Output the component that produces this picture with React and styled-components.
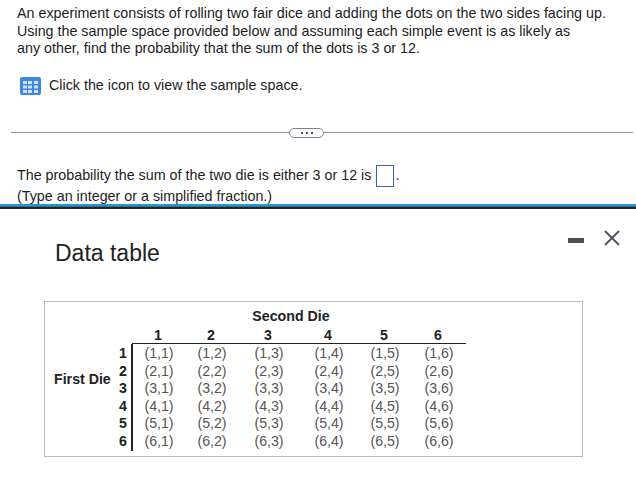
import React from "react";
import styled, { createGlobalStyle } from "styled-components";

const GlobalStyle = createGlobalStyle`
  html, body {
    margin: 0;
    padding: 0;
    background: #fff;
  }
  body {
    width: 636px;
    height: 496px;
    overflow: hidden;
    font-family: "Liberation Sans", Arial, sans-serif;
    color: #1c1c1c;
  }
`;

const Page = styled.div`
  width: 636px;
  height: 496px;
  display: flex;
  flex-direction: column;
`;

const Question = styled.section`
  height: 204px;
  overflow: hidden;
  padding: 5px 0 0 17px;
  box-sizing: border-box;
  font-size: 14.3px;
  line-height: 17.5px;
`;

const Prompt = styled.p`
  margin: 0;
  white-space: pre-line;
`;

const IconRow = styled.div`
  display: flex;
  align-items: center;
  gap: 8px;
  margin: 18px 0 0 3px;
  height: 20px;
`;

const Divider = styled.div`
  display: flex;
  align-items: center;
  margin: 32px 3px 0 -6px;
  height: 10px;
`;

const Rule = styled.div`
  flex: ${(p) => p.$grow};
  height: 1px;
  background: #8a90a3;
`;

const MoreButton = styled.div`
  width: 33px;
  height: 8px;
  border: 1px solid #7c8294;
  border-radius: 5px;
  display: flex;
  align-items: center;
  justify-content: center;
  gap: 3px;
`;

const Dot = styled.span`
  width: 2px;
  height: 2px;
  background: #4a5060;
`;

const Answer = styled.div`
  display: flex;
  align-items: center;
  margin-top: 26px;
  height: 24px;
`;

const AnswerBox = styled.span`
  width: 16px;
  height: 20px;
  border: 1px solid #2f66c4;
  margin: 0 1px 0 5px;
`;

const Hint = styled.div`
  margin-top: 0;
`;

const Modal = styled.section`
  flex: 1;
  position: relative;
  border-top: 2px solid #1f9ad0;
  &::before {
    content: "";
    display: block;
    height: 3px;
    background: linear-gradient(#3a6f86 0 1px, #20262e 1px);
  }
`;

const ModalHead = styled.div`
  display: flex;
  justify-content: space-between;
  align-items: flex-start;
  height: 92px;
  box-sizing: border-box;
  padding: 29px 16px 0 55px;
`;

const ModalTitle = styled.h2`
  margin: 0;
  font-size: 23px;
  line-height: 30px;
  font-weight: 400;
  color: #222;
`;

const Controls = styled.div`
  display: flex;
  align-items: center;
  gap: 20px;
  margin-top: -8px;
`;

const TableFrame = styled.div`
  width: 537px;
  height: 154px;
  margin-left: 44px;
  border: 1px solid #b9b9b9;
  display: flex;
  flex-direction: column;
  font-size: 14.2px;
`;

const AxisTitle = styled.div`
  font-weight: 700;
  color: #222;
  text-align: center;
  width: 334px;
  margin: 6px 0 0 87px;
  height: 17px;
  line-height: 17px;
  padding-right: 16px;
  box-sizing: border-box;
`;

const Grid = styled.div`
  display: flex;
`;

const SideLabel = styled.div`
  width: 66px;
  font-weight: 700;
  padding-left: 9px;
  box-sizing: border-box;
  color: #222;
  display: flex;
  align-items: center;
  margin-top: 19px;
  padding-bottom: 37px;
  white-space: nowrap;
`;

const RowNumbers = styled.div`
  width: 21px;
  margin-top: 20px;
`;

const Table = styled.div`
  display: grid;
  grid-template-columns: 52px 54px 60px 60px 52px 56px;
  grid-auto-rows: 17.6px;
  padding-top: 1px;
`;

const ColHead = styled.div`
  font-weight: 700;
  text-align: center;
  height: 19px;
  line-height: 20px;
  color: #222;
  border-bottom: 1px solid #222;
  box-sizing: border-box;
`;

const Cell = styled.div`
  text-align: center;
  line-height: 17.6px;
  color: #555;
  white-space: nowrap;
`;

const Body = styled.div`
  border-left: 2px solid #222;
  margin-left: -1px;
`;

const RowNum = styled.div`
  font-weight: 700;
  text-align: right;
  padding-right: 5px;
  height: 17.6px;
  line-height: 17.6px;
  color: #222;
`;

const Head = styled.div`
  display: grid;
  grid-template-columns: 52px 54px 60px 60px 52px 56px;
`;

const Matrix = styled.div``;

const TableIcon = () => (
  <svg width="21" height="18" viewBox="0 0 21 18">
    <rect width="21" height="18" rx="2" fill="#3f86de" />
    {[4, 8.5, 13].map((y) =>
      [3, 8, 14].map((x) => <rect key={`${x}-${y}`} x={x} y={y} width="4" height="3" fill="#cfe2f8" />)
    )}
  </svg>
);

const Minimize = () => (
  <svg width="16" height="16" viewBox="0 0 16 16">
    <rect x="0" y="8" width="16" height="5" fill="#4a4f5a" />
  </svg>
);

const Close = () => (
  <svg width="16" height="16" viewBox="0 0 16 16">
    <path d="M1 1 L15 15 M15 1 L1 15" stroke="#4a5260" strokeWidth="1.8" fill="none" />
  </svg>
);

const dice = [1, 2, 3, 4, 5, 6];

const App = () => {
  return (
    <Page>
      <GlobalStyle />
      <Question>
        <Prompt>
          {`An experiment consists of rolling two fair dice and adding the dots on the two sides facing up.
Using the sample space provided below and assuming each simple event is as likely as
any other, find the probability that the sum of the dots is 3 or 12.`}
        </Prompt>
        <IconRow>
          <TableIcon />
          <span>Click the icon to view the sample space.</span>
        </IconRow>
        <Divider>
          <Rule $grow="0 0 278px" />
          <MoreButton>
            <Dot />
            <Dot />
            <Dot />
          </MoreButton>
          <Rule $grow="1" />
        </Divider>
        <Answer>
          The probability the sum of the two die is either 3 or 12 is
          <AnswerBox />.
        </Answer>
        <Hint>(Type an integer or a simplified fraction.)</Hint>
      </Question>
      <Modal>
        <ModalHead>
          <ModalTitle>Data table</ModalTitle>
          <Controls>
            <Minimize />
            <Close />
          </Controls>
        </ModalHead>
        <TableFrame>
          <AxisTitle>Second Die</AxisTitle>
          <Grid>
            <SideLabel>First Die</SideLabel>
            <RowNumbers>
              {dice.map((r) => (
                <RowNum key={r}>{r}</RowNum>
              ))}
            </RowNumbers>
            <Matrix>
              <Head>
                {dice.map((c) => (
                  <ColHead key={c}>{c}</ColHead>
                ))}
              </Head>
              <Body>
                <Table>
                  {dice.map((r) =>
                    dice.map((c) => <Cell key={`${r}${c}`}>{`(${r},${c})`}</Cell>)
                  )}
                </Table>
              </Body>
            </Matrix>
          </Grid>
        </TableFrame>
      </Modal>
    </Page>
  );
};

export default App;
